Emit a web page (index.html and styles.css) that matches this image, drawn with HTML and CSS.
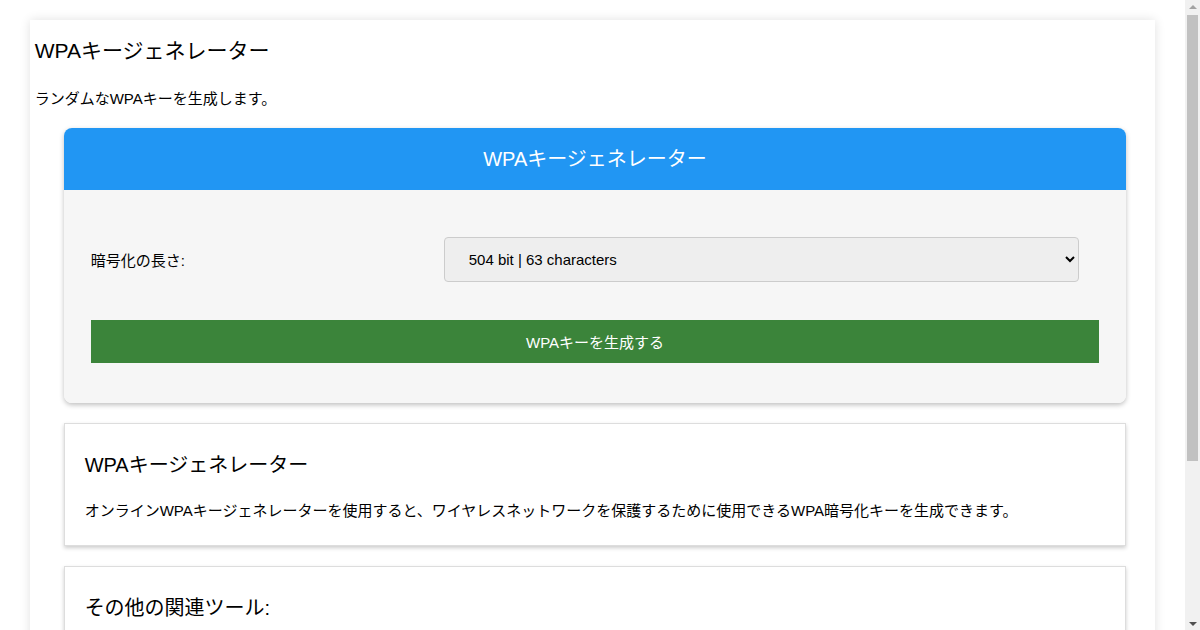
FILE: index.html
```html
<!DOCTYPE html>
<html lang="ja">
<head>
<meta charset="utf-8">
<title>WPAキージェネレーター</title>
<link rel="stylesheet" href="styles.css">
</head>
<body>
<div class="container">
  <h1 class="page-title">WPAキージェネレーター</h1>
  <p class="lead">ランダムなWPAキーを生成します。</p>

  <div class="tool-card">
    <div class="tool-header">WPAキージェネレーター</div>
    <div class="tool-body">
      <div class="form-row">
        <label class="form-label" for="len">暗号化の長さ:</label>
        <select class="form-select" id="len">
          <option>504 bit | 63 characters</option>
          <option>256 bit | 32 characters</option>
          <option>160 bit | 20 characters</option>
          <option>128 bit | 16 characters</option>
          <option>64 bit | 8 characters</option>
        </select>
      </div>
      <button class="gen-btn" type="button">WPAキーを生成する</button>
    </div>
  </div>

  <div class="info-card">
    <h2 class="info-title">WPAキージェネレーター</h2>
    <p class="info-text">オンラインWPAキージェネレーターを使用すると、ワイヤレスネットワークを保護するために使用できるWPA暗号化キーを生成できます。</p>
  </div>

  <div class="info-card last">
    <h2 class="info-title">その他の関連ツール:</h2>
    <ul class="tool-list">
      <li>パスワードジェネレーター</li>
      <li>WEPキージェネレーター</li>
      <li>ランダム文字列ジェネレーター</li>
      <li>MD5ハッシュジェネレーター</li>
    </ul>
  </div>
</div>

<div class="scrollbar" aria-hidden="true">
  <div class="sb-btn"><span class="sb-up"></span></div>
  <div class="sb-thumb"></div>
  <div class="sb-space"></div>
  <div class="sb-btn"><span class="sb-down"></span></div>
</div>
</body>
</html>
```

FILE: styles.css
```css
html, body {
  margin: 0;
  padding: 0;
  background: #ffffff;
}

body {
  margin-right: 15px;
  font-family: "Liberation Sans", "Noto Sans CJK JP", sans-serif;
  font-size: 15px;
  color: #000;
}

.container {
  width: 95%;
  margin: 20px auto;
  padding: 14px 5px 20px;
  box-sizing: border-box;
  background: #fff;
  box-shadow: 0 0 10px rgba(0, 0, 0, 0.12);
}

.page-title {
  margin: 0;
  font-size: 21px;
  font-weight: normal;
}

.lead {
  margin: 23px 0 0;
  font-size: 15px;
}

.tool-card {
  margin: 20px 24px 20px 29px;
  border-radius: 8px;
  overflow: hidden;
  box-shadow: 0 2px 5px rgba(0, 0, 0, 0.25);
}

.tool-header {
  background: #2196f3;
  color: #fff;
  text-align: center;
  font-size: 20px;
  line-height: 30px;
  padding: 16px 0;
}

.tool-body {
  background: #f6f6f6;
  padding: 47px 27px 40px 27px;
}

.form-row {
  display: flex;
  align-items: center;
  justify-content: space-between;
  height: 45px;
}

.form-label {
  width: 35%;
  font-size: 15px;
}

.form-select {
  width: 63%;
  height: 45px;
  margin-right: 2%;
  padding: 0 20px;
  background-color: #eeeeee;
  border: 1px solid #cccccc;
  border-radius: 4px;
  font-family: "Liberation Sans", "Noto Sans CJK JP", sans-serif;
  font-size: 15px;
  color: #000;
}

.gen-btn {
  display: block;
  width: 100%;
  height: 43px;
  margin-top: 38px;
  border: none;
  background: #3b843a;
  color: #fff;
  font-family: "Liberation Sans", "Noto Sans CJK JP", sans-serif;
  font-size: 15px;
}

.info-card {
  margin: 20px 24px 20px 29px;
  padding: 25px 20px 25px;
  background: #fff;
  border: 1px solid #dddddd;
  box-shadow: 0 2px 4px rgba(0, 0, 0, 0.2);
}

.info-card.last {
  padding-bottom: 28px;
}

.info-title {
  margin: 0 0 21px;
  font-size: 20px;
  font-weight: normal;
}

.info-text {
  margin: 0;
  font-size: 15px;
}

.tool-list {
  margin: 0;
  padding-left: 20px;
  line-height: 30px;
}

/* classic scrollbar drawn over the right edge */
.scrollbar {
  position: fixed;
  top: 0;
  right: 0;
  width: 15px;
  height: 100vh;
  background: #f1f1f1;
  display: flex;
  flex-direction: column;
  align-items: center;
}

.sb-btn {
  height: 15px;
  width: 15px;
  display: flex;
  align-items: center;
  justify-content: center;
  flex: none;
}

.sb-up {
  width: 0;
  height: 0;
  border-left: 4px solid transparent;
  border-right: 4px solid transparent;
  border-bottom: 4px solid #a3a3a3;
  margin-top: -1px;
}

.sb-down {
  width: 0;
  height: 0;
  border-left: 4px solid transparent;
  border-right: 4px solid transparent;
  border-top: 4px solid #505050;
  margin-top: 2px;
}

.sb-thumb {
  width: 11px;
  height: 446px;
  background: #c1c1c1;
  flex: none;
}

.sb-space {
  flex: 1;
}
```
